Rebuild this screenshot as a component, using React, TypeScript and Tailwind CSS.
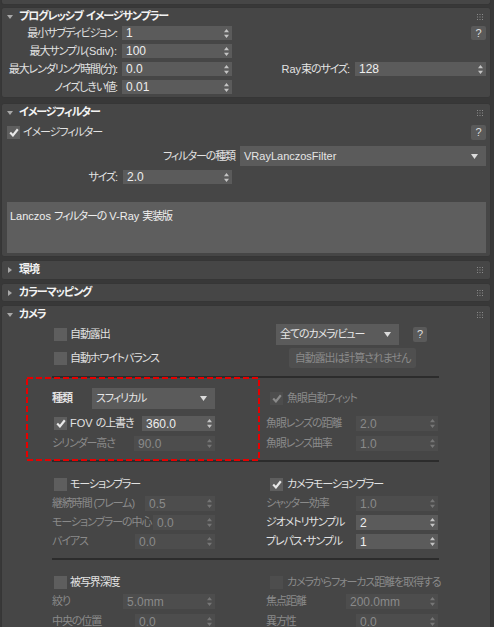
import type { ReactNode } from "react"

function Spin({ dim }: { dim?: boolean }) {
  return (
    <svg width="5" height="9" viewBox="0 0 5 9" className={dim ? "fill-[#767676]" : "fill-[#c4c4c4]"}>
      <path d="M2.5 0 L5 3.2 L0 3.2 Z M0 5.8 L5 5.8 L2.5 9 Z" />
    </svg>
  )
}

function DownTri() {
  return (
    <svg width="7" height="5" viewBox="0 0 7 5" className="fill-[#dcdcdc]">
      <path d="M0 0 L7 0 L3.5 5 Z" />
    </svg>
  )
}

function NumBox({ value, className, dim }: { value: string; className: string; dim?: boolean }) {
  return (
    <div
      className={`flex items-center justify-between pl-[4px] pr-[3px] text-[12px] leading-none tracking-normal ${
        dim ? "bg-[#4d4d4d] text-[#8a8a8a]" : "bg-[#5b5b5b] text-[#eeeeee]"
      } ${className}`}
    >
      <span>{value}</span>
      <Spin dim={dim} />
    </div>
  )
}

function Drop({ children, className }: { children: ReactNode; className: string }) {
  return (
    <div className={`flex items-center justify-between bg-[#5b5b5b] pl-[4px] pr-[8px] text-[11px] text-[#e6e6e6] ${className}`}>
      <span className="whitespace-nowrap">{children}</span>
      <DownTri />
    </div>
  )
}

function Help({ className }: { className: string }) {
  return (
    <div className={`flex items-center justify-center rounded-[2px] bg-[#5a5a5a] text-[11px] tracking-normal text-[#dddddd] ${className}`}>?</div>
  )
}

function Check({ on, dim }: { on?: boolean; dim?: boolean }) {
  return (
    <span className={`flex h-[13px] w-[13px] shrink-0 items-center justify-center ${dim ? "bg-[#4d4d4d]" : "bg-[#5e5e5e]"}`}>
      {on && (
        <svg width="10" height="9" viewBox="0 0 10 9">
          <path d="M1.2 4.6 L3.9 7.4 L8.8 1.2" fill="none" stroke={dim ? "#8a8a8a" : "#e8e8e8"} strokeWidth="2.2" />
        </svg>
      )}
    </span>
  )
}

function Grip() {
  return (
    <svg width="6" height="6" viewBox="0 0 6 6" className="ml-auto fill-[#8c8c8c]">
      <rect x="0" y="0" width="1" height="1" />
      <rect x="2.5" y="0" width="1" height="1" />
      <rect x="5" y="0" width="1" height="1" />
      <rect x="0" y="2.5" width="1" height="1" />
      <rect x="2.5" y="2.5" width="1" height="1" />
      <rect x="5" y="2.5" width="1" height="1" />
      <rect x="0" y="5" width="1" height="1" />
      <rect x="2.5" y="5" width="1" height="1" />
      <rect x="5" y="5" width="1" height="1" />
    </svg>
  )
}

function Panel({ title, open = true, className, children }: { title: ReactNode; open?: boolean; className: string; children?: ReactNode }) {
  return (
    <div className={`rounded-[3px] border border-[#363636] bg-[#464646] ${className}`}>
      <div className="flex h-[17px] items-center pl-[5px] pr-[7px]">
        <span className="flex w-[6px] justify-center">
          {open ? (
            <svg width="6" height="4" viewBox="0 0 6 4" className="fill-[#a8a8a8]">
              <path d="M0 0 L6 0 L3 4 Z" />
            </svg>
          ) : (
            <svg width="4" height="6" viewBox="0 0 4 6" className="fill-[#a8a8a8]">
              <path d="M0 0 L4 3 L0 6 Z" />
            </svg>
          )}
        </span>
        <span className="ml-[6px] whitespace-nowrap text-[11px] font-bold text-[#f2f2f2]">{title}</span>
        <Grip />
      </div>
      {children}
    </div>
  )
}

function Field({ label, lw, iw, value, dim, dimLabel }: { label: string; lw: string; iw: string; value: string; dim?: boolean; dimLabel?: boolean }) {
  return (
    <>
      <span className={`${lw} shrink-0 whitespace-nowrap ${dimLabel ? "text-[#8a8a8a]" : "text-[#e2e2e2]"}`}>{label}</span>
      <NumBox value={value} dim={dim} className={`h-[15px] ${iw}`} />
    </>
  )
}

function Line({ className, left, right }: { className: string; left: ReactNode; right: ReactNode }) {
  return (
    <div className={`flex pl-[50px] ${className}`}>
      <div className="flex w-[214px] items-center">{left}</div>
      <div className="flex flex-1 items-center">{right}</div>
    </div>
  )
}

function Sep({ className }: { className: string }) {
  return <div className={`ml-[50px] h-[2px] w-[387px] bg-[#2c2c2c] ${className}`} />
}

export default function App() {
  return (
    <div className="relative h-[627px] w-[494px] overflow-hidden bg-[#383838] font-['Liberation_Sans','Noto_Sans_CJK_JP',sans-serif] text-[11px] tracking-[-1.1px] text-[#e2e2e2] [font-feature-settings:'palt']">
      <div className="flex w-[491px] flex-col pl-[1px]">
        <div className="h-[5px] rounded-b-[3px] border-x border-b border-[#363636] bg-[#464646]" />

        <Panel
          title={
            <>
              プログレッシブ<span className="tracking-normal"> </span>イメージサンプラー
            </>
          }
          className="mt-[2px]"
        >
          <div className="flex flex-col gap-[4px] pb-[3px] pt-[1px]">
            <div className="flex h-[14px] items-center">
              <span className="w-[115px] text-right">最小サブディビジョン:</span>
              <NumBox value="1" className="ml-[5px] h-[14px] w-[110px]" />
              <Help className="ml-[239px] h-[14px] w-[15px]" />
            </div>
            <div className="flex h-[14px] items-center">
              <span className="w-[115px] text-right">
                最大サンプル<span className="tracking-normal">(Sdiv):</span>
              </span>
              <NumBox value="100" className="ml-[5px] h-[14px] w-[110px]" />
            </div>
            <div className="flex h-[14px] items-center">
              <span className="w-[115px] whitespace-nowrap text-right">最大レンダリング時間(分):</span>
              <NumBox value="0.0" className="ml-[5px] h-[14px] w-[110px]" />
              <span className="w-[117px] text-right">
                <span className="tracking-normal">Ray</span>束のサイズ:
              </span>
              <NumBox value="128" className="ml-[6px] h-[14px] w-[131px]" />
            </div>
            <div className="flex h-[14px] items-center">
              <span className="w-[115px] text-right">ノイズしきい値:</span>
              <NumBox value="0.01" className="ml-[5px] h-[14px] w-[110px]" />
            </div>
          </div>
        </Panel>

        <Panel title="イメージフィルター" className="mt-[5px]">
          <div className="flex flex-col pb-[3px]">
            <div className="mt-[4px] flex h-[15px] items-center pl-[5px] pr-[4px]">
              <Check on />
              <span className="ml-[3px]">イメージフィルター</span>
              <Help className="ml-auto h-[15px] w-[15px]" />
            </div>
            <div className="mt-[6px] flex h-[20px] items-center">
              <span className="w-[233px] text-right">フィルターの種類</span>
              <Drop className="ml-[5px] h-[20px] w-[246px] tracking-normal">VRayLanczosFilter</Drop>
            </div>
            <div className="mt-[4px] flex h-[14px] items-center">
              <span className="w-[115px] text-right">サイズ:</span>
              <NumBox value="2.0" className="ml-[6px] h-[14px] w-[109px]" />
            </div>
            <div className="ml-[5px] mt-[18px] h-[51px] w-[479px] bg-[#5e5e5e] pl-[3px] pt-[6px] text-[11px] text-[#eeeeee]">
              <span className="tracking-normal">Lanczos </span>フィルターの<span className="tracking-normal"> V-Ray </span>実装版
            </div>
          </div>
        </Panel>

        <Panel title="環境" open={false} className="mt-[3px] pb-[1px]" />
        <Panel title="カラーマッピング" open={false} className="mt-[3px]" />

        <Panel title="カメラ" className="mt-[3px] pb-[20px]">
          <Line
            className="mt-[1px] h-[21px]"
            left={
              <>
                <span className="ml-[2px]"><Check /></span>
                <span className="ml-[3px]">自動露出</span>
              </>
            }
            right={
              <>
                <Drop className="ml-[10px] h-[21px] w-[123px]">
                  全てのカメラ<span className="tracking-normal">/</span>ビュー
                </Drop>
                <Help className="ml-[14px] h-[15px] w-[14px]" />
              </>
            }
          />
          <Line
            className="mt-[3px] h-[20px]"
            left={
              <>
                <span className="ml-[2px]"><Check /></span>
                <span className="ml-[3px]">自動ホワイトバランス</span>
              </>
            }
            right={
              <div className="ml-[23px] flex h-[20px] w-[127px] items-center justify-center rounded-[2px] bg-[#4f4f4f] text-[#8a8a8a]">
                自動露出は計算されません
              </div>
            }
          />
          <Sep className="mt-[8px]" />

          <Line
            className="mt-[10px] h-[21px]"
            left={
              <>
                <span className="w-[40px] shrink-0 font-bold">種類</span>
                <Drop className="h-[21px] w-[123px]">スフィリカル</Drop>
              </>
            }
            right={
              <>
                <span className="ml-[4px]"><Check on dim /></span>
                <span className="ml-[4px] text-[#8a8a8a]">魚眼自動フィット</span>
              </>
            }
          />
          <Line
            className="mt-[7px] h-[15px]"
            left={
              <>
                <div className="flex w-[90px] shrink-0 items-center">
                  <span className="ml-[2px]"><Check on /></span>
                  <span className="ml-[3px] whitespace-nowrap">
                    <span className="tracking-normal">FOV </span>の上書き
                  </span>
                </div>
                <NumBox value="360.0" className="h-[15px] w-[73px]" />
              </>
            }
            right={<Field label="魚眼レンズの距離" lw="w-[90px]" iw="w-[82px]" value="2.0" dim dimLabel />}
          />
          <Line
            className="mt-[5px] h-[15px]"
            left={<Field label="シリンダー高さ" lw="w-[82px]" iw="w-[81px]" value="90.0" dim dimLabel />}
            right={<Field label="魚眼レンズ曲率" lw="w-[90px]" iw="w-[82px]" value="1.0" dim dimLabel />}
          />
          <Sep className="mt-[9px]" />

          <Line
            className="mt-[15px] h-[14px]"
            left={
              <>
                <span className="ml-[2px]"><Check /></span>
                <span className="ml-[3px]">モーションブラー</span>
              </>
            }
            right={
              <>
                <span className="ml-[4px]"><Check on /></span>
                <span className="ml-[4px]">カメラモーションブラー</span>
              </>
            }
          />
          <Line
            className="mt-[5px] h-[15px]"
            left={<Field label="継続時間 (フレーム)" lw="w-[93px]" iw="w-[70px]" value="0.5" dim dimLabel />}
            right={<Field label="シャッター効率" lw="w-[90px]" iw="w-[82px]" value="1.0" dim dimLabel />}
          />
          <Line
            className="mt-[4px] h-[15px]"
            left={<Field label="モーションブラーの中心" lw="w-[101px]" iw="w-[62px]" value="0.0" dim dimLabel />}
            right={<Field label="ジオメトリサンプル" lw="w-[90px]" iw="w-[82px]" value="2" />}
          />
          <Line
            className="mt-[4px] h-[15px]"
            left={<Field label="バイアス" lw="w-[83px]" iw="w-[80px]" value="0.0" dim dimLabel />}
            right={<Field label="プレパス・サンプル" lw="w-[90px]" iw="w-[82px]" value="1" />}
          />
          <Sep className="mt-[9px]" />

          <Line
            className="mt-[15px] h-[14px]"
            left={
              <>
                <span className="ml-[2px]"><Check /></span>
                <span className="ml-[3px]">被写界深度</span>
              </>
            }
            right={
              <>
                <span className="ml-[4px]"><Check dim /></span>
                <span className="ml-[4px] text-[#8a8a8a]">カメラからフォーカス距離を取得する</span>
              </>
            }
          />
          <Line
            className="mt-[5px] h-[15px]"
            left={<Field label="絞り" lw="w-[71px]" iw="w-[92px]" value="5.0mm" dim dimLabel />}
            right={<Field label="焦点距離" lw="w-[80px]" iw="w-[92px]" value="200.0mm" dim dimLabel />}
          />
          <Line
            className="mt-[5px] h-[15px]"
            left={<Field label="中央の位置" lw="w-[83px]" iw="w-[80px]" value="0.0" dim dimLabel />}
            right={<Field label="異方性" lw="w-[90px]" iw="w-[82px]" value="0.0" dim dimLabel />}
          />
        </Panel>
      </div>

      <svg className="absolute left-[26px] top-[377px]" width="234" height="84" viewBox="0 0 234 84">
        <rect x="1" y="1" width="232" height="82" fill="none" stroke="#e60000" strokeWidth="2" strokeDasharray="6 3" />
      </svg>
    </div>
  )
}
